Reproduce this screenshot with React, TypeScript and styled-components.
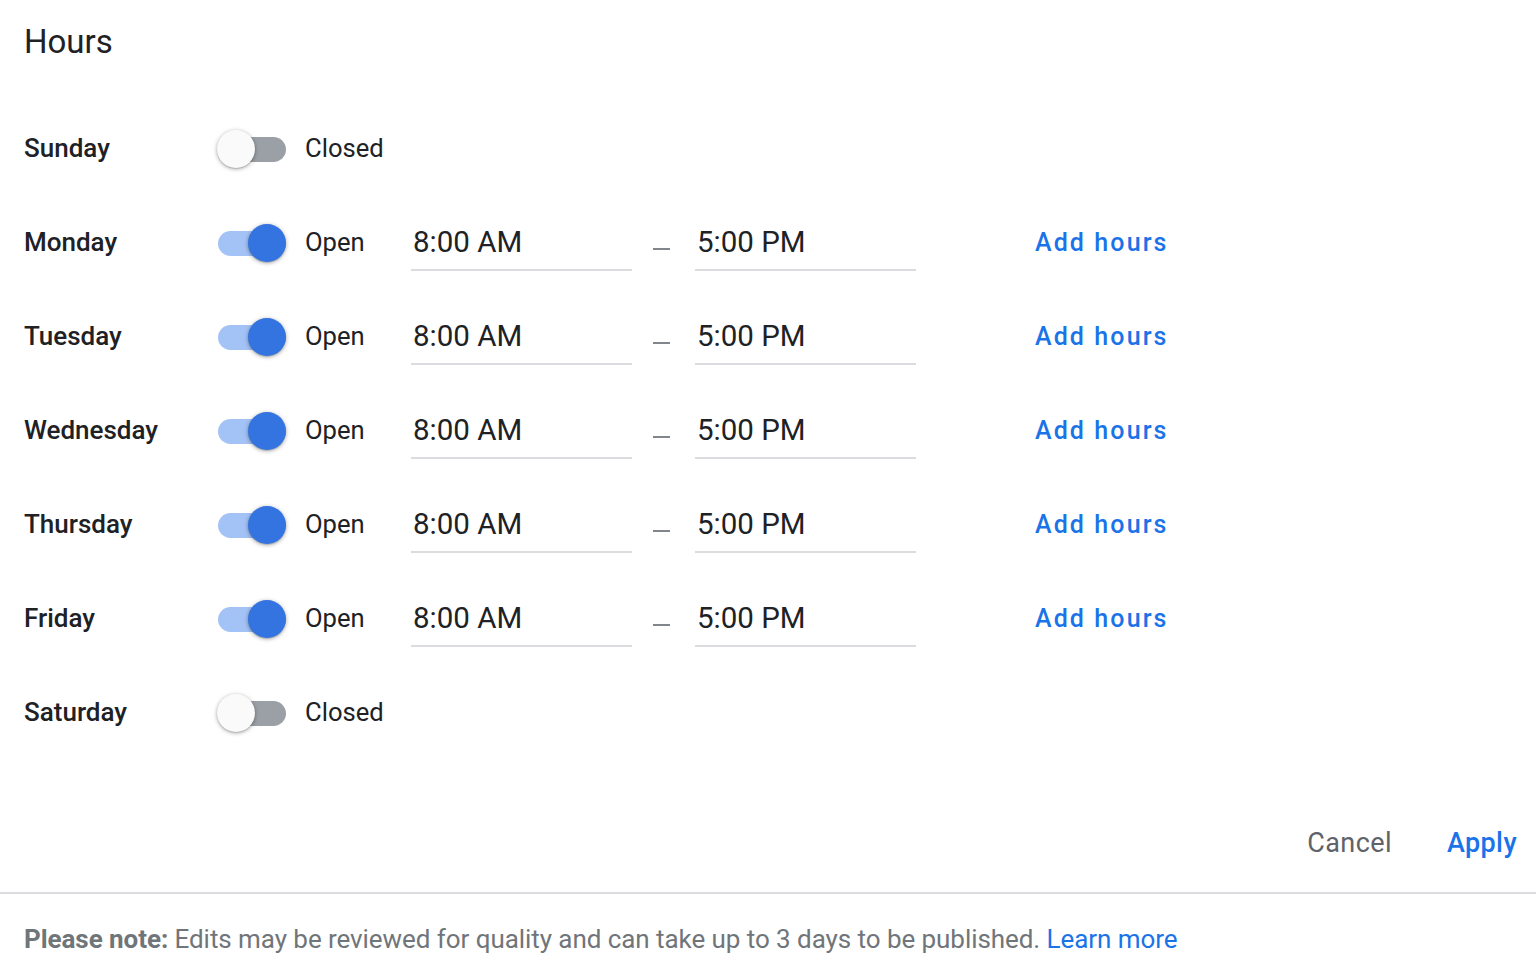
import * as React from 'react';
import styled, { createGlobalStyle } from 'styled-components';

const COLOR = {
  TEXT: '#202124',
  MUTED: '#5f6368',
  NOTE: '#70757a',
  BLUE: '#1a73e8',
  THUMB_ON: '#3474e0',
  TRACK_ON: '#a3c2f6',
  TRACK_OFF: '#9aa0a6',
  LINE: '#dadce0',
};

interface Day {
  name: string;
  open: boolean;
}

const DAYS: Day[] = [
  { name: 'Sunday', open: false },
  { name: 'Monday', open: true },
  { name: 'Tuesday', open: true },
  { name: 'Wednesday', open: true },
  { name: 'Thursday', open: true },
  { name: 'Friday', open: true },
  { name: 'Saturday', open: false },
];

const GlobalStyle = createGlobalStyle`
  html, body {
    margin: 0;
    padding: 0;
    background: #ffffff;
  }
  body {
    font-family: Roboto, "Liberation Sans", Arial, sans-serif;
    color: ${COLOR.TEXT};
  }
`;

const Page = styled.div`
  display: flex;
  flex-direction: column;
  width: 1536px;
  height: 966px;
  overflow: hidden;
`;

const Content = styled.div`
  display: flex;
  flex-direction: column;
  padding: 20px 0 0 24px;
`;

const Title = styled.h1`
  margin: 0;
  font-size: 33px;
  line-height: 44px;
  font-weight: 400;
  color: ${COLOR.TEXT};
`;

const List = styled.div`
  display: flex;
  flex-direction: column;
  margin-top: 37px;
`;

const Row = styled.div`
  display: flex;
  align-items: center;
  height: 94px;
`;

const DayName = styled.div`
  width: 194px;
  font-size: 26px;
  font-weight: 500;
  color: ${COLOR.TEXT};
`;

const Track = styled.div<{ $on: boolean }>`
  display: flex;
  align-items: center;
  justify-content: ${(p) => (p.$on ? 'flex-end' : 'flex-start')};
  width: 68px;
  height: 25px;
  margin-top: 2px;
  border-radius: 13px;
  background: ${(p) => (p.$on ? COLOR.TRACK_ON : COLOR.TRACK_OFF)};
`;

const Thumb = styled.div<{ $on: boolean }>`
  flex: 0 0 auto;
  width: 38px;
  height: 38px;
  border-radius: 50%;
  margin-left: ${(p) => (p.$on ? '0' : '-1px')};
  background: ${(p) => (p.$on ? COLOR.THUMB_ON : '#fafafa')};
  box-shadow: 0 1px 4px rgba(0, 0, 0, 0.35), 0 1px 1px rgba(0, 0, 0, 0.12);
`;

const Status = styled.div`
  width: 106px;
  margin-left: 19px;
  font-size: 25.6px;
  color: ${COLOR.TEXT};
`;

const TimeField = styled.div`
  display: flex;
  align-items: center;
  box-sizing: border-box;
  width: 221px;
  height: 58px;
  padding: 2px 0 0 2px;
  border-bottom: 2px solid ${COLOR.LINE};
  font-size: 29.5px;
  color: ${COLOR.TEXT};
`;

const DashCell = styled.div`
  display: flex;
  justify-content: center;
  width: 63px;
`;

const Dash = styled.span`
  display: block;
  width: 17px;
  height: 2px;
  margin: 14px 0 0 -4px;
  background: #80868b;
`;

const AddHours = styled.a`
  margin-left: 119px;
  font-size: 25px;
  font-weight: 500;
  letter-spacing: 2.1px;
  color: ${COLOR.BLUE};
  text-decoration: none;
  cursor: pointer;
`;

const Actions = styled.div`
  display: flex;
  justify-content: flex-end;
  align-items: center;
  gap: 55px;
  height: 48px;
  margin-top: 60px;
  padding-right: 19px;
`;

const ActionButton = styled.button<{ $primary?: boolean }>`
  padding: 0;
  border: none;
  background: none;
  font-family: Roboto, "Liberation Sans", Arial, sans-serif;
  font-size: 27px;
  font-weight: ${(p) => (p.$primary ? 500 : 400)};
  letter-spacing: 0.4px;
  color: ${(p) => (p.$primary ? COLOR.BLUE : COLOR.MUTED)};
  cursor: pointer;
`;

const Divider = styled.div`
  height: 2px;
  margin-top: 25px;
  background: ${COLOR.LINE};
`;

const Note = styled.p`
  margin: 0;
  padding: 27px 0 0 24px;
  font-size: 26px;
  line-height: 36px;
  letter-spacing: -0.06px;
  color: ${COLOR.NOTE};
`;

const NoteLabel = styled.b`
  font-weight: 700;
`;

const NoteLink = styled.a`
  color: ${COLOR.BLUE};
  text-decoration: none;
`;

const Toggle = ({ on }: { on: boolean }) => (
  <Track $on={on}>
    <Thumb $on={on} />
  </Track>
);

const DayRow = ({ day }: { day: Day }) => (
  <Row>
    <DayName>{day.name}</DayName>
    <Toggle on={day.open} />
    <Status>{day.open ? 'Open' : 'Closed'}</Status>
    {day.open && (
      <>
        <TimeField>8:00 AM</TimeField>
        <DashCell>
          <Dash />
        </DashCell>
        <TimeField>5:00 PM</TimeField>
        <AddHours>Add hours</AddHours>
      </>
    )}
  </Row>
);

export default function App() {
  return (
    <Page>
      <GlobalStyle />
      <Content>
        <Title>Hours</Title>
        <List>
          {DAYS.map((day) => (
            <DayRow key={day.name} day={day} />
          ))}
        </List>
      </Content>
      <Actions>
        <ActionButton>Cancel</ActionButton>
        <ActionButton $primary>Apply</ActionButton>
      </Actions>
      <Divider />
      <Note>
        <NoteLabel>Please note:</NoteLabel> Edits may be reviewed for quality and can take up to 3 days to be published.{' '}
        <NoteLink>Learn more</NoteLink>
      </Note>
    </Page>
  );
}
